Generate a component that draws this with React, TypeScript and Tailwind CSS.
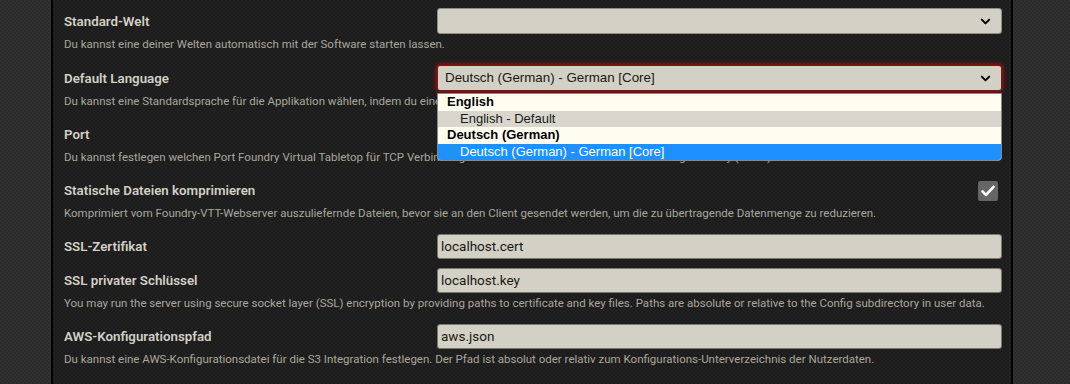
import { ChevronDown } from 'lucide-react'

const uiFont = "font-['Roboto','Noto_Sans',sans-serif]"

type Row = {
  label: string
  hint?: string
  kind: 'select' | 'text' | 'check'
  value?: string
  focus?: boolean
}

const rows: Row[] = [
  {
    label: 'Standard-Welt',
    kind: 'select',
    value: '',
    hint: 'Du kannst eine deiner Welten automatisch mit der Software starten lassen.',
  },
  {
    label: 'Default Language',
    kind: 'select',
    value: 'Deutsch (German) - German [Core]',
    focus: true,
    hint: 'Du kannst eine Standardsprache für die Applikation wählen, indem du eine der installierten Sprachen auswählst.',
  },
  {
    label: 'Port',
    kind: 'text',
    value: '30000',
    hint: 'Du kannst festlegen welchen Port Foundry Virtual Tabletop für TCP Verbindungen nutzen. Zudem kannst du Universal Plug and Play (UPnP) verwenden.',
  },
  {
    label: 'Statische Dateien komprimieren',
    kind: 'check',
    hint: 'Komprimiert vom Foundry-VTT-Webserver auszuliefernde Dateien, bevor sie an den Client gesendet werden, um die zu übertragende Datenmenge zu reduzieren.',
  },
  { label: 'SSL-Zertifikat', kind: 'text', value: 'localhost.cert' },
  {
    label: 'SSL privater Schlüssel',
    kind: 'text',
    value: 'localhost.key',
    hint: 'You may run the server using secure socket layer (SSL) encryption by providing paths to certificate and key files. Paths are absolute or relative to the Config subdirectory in user data.',
  },
  {
    label: 'AWS-Konfigurationspfad',
    kind: 'text',
    value: 'aws.json',
    hint: 'Du kannst eine AWS-Konfigurationsdatei für die S3 Integration festlegen. Der Pfad ist absolut oder relativ zum Konfigurations-Unterverzeichnis der Nutzerdaten.',
  },
]

function LanguageMenu() {
  return (
    <div className="absolute left-0 right-0 top-[28px] z-10 overflow-hidden rounded-b-[4px] border border-[#8a8a8a] bg-[#fffdf0] font-['Liberation_Sans',Arial,sans-serif] text-[13px] text-black">
      <div className="h-[16.5px] pl-[9px] font-bold leading-[16.5px]">English</div>
      <div className="h-[16.5px] bg-[#d9d7cd] pl-[22px] leading-[16.5px] text-[#1a1a1a]">English - Default</div>
      <div className="h-[16.5px] pl-[9px] font-bold leading-[16.5px]">Deutsch (German)</div>
      <div className="h-[16.5px] bg-[#1e90ff] pl-[22px] leading-[16.5px] text-white">Deutsch (German) - German [Core]</div>
    </div>
  )
}

function Field({ row }: { row: Row }) {
  if (row.kind === 'check') {
    return (
      <div className="flex h-[25px] flex-1 items-center justify-end pr-[4px]">
        <div className="flex h-[20px] w-[20px] items-center justify-center rounded-[2px] bg-[#666]">
          <svg width="14" height="12" viewBox="0 0 14 12">
            <path d="M1.5 6.5 L5 10 L12.5 1.8" fill="none" stroke="white" strokeWidth="2.6" strokeLinecap="round" strokeLinejoin="round" />
          </svg>
        </div>
      </div>
    )
  }
  if (row.kind === 'select') {
    return (
      <div className="relative flex-1">
        <div
          className={`flex h-[26px] items-center justify-between rounded-[3px] border bg-[#d3d1c5] pl-[7px] pr-[8px] font-['Liberation_Sans',Arial,sans-serif] text-[13.33px] text-[#191813] ${
            row.focus ? 'border-[#6e1a12] shadow-[0_0_5px_#ff0000]' : 'border-[#8f8d85]'
          }`}
        >
          <span>{row.value}</span>
          <ChevronDown size={15} strokeWidth={3.2} className="text-black" />
        </div>
        {row.focus && <LanguageMenu />}
      </div>
    )
  }
  return (
    <div className="flex-1">
      <div className="flex h-[25px] items-center rounded-[3px] border border-[#7a7971] bg-[#d3d1c5] pl-[3px] text-[13.5px] text-[#191813]">
        {row.value}
      </div>
    </div>
  )
}

export default function App() {
  return (
    <div className="h-[384px] w-[1070px] overflow-hidden bg-[#2c2c2c] bg-[repeating-conic-gradient(#2a2a2a_0_25%,#313131_0_50%)] bg-[length:4px_4px]">
      <div
        className={`ml-[51px] h-full w-[962px] border-x-2 border-black bg-[#1e1e1e] bg-[repeating-conic-gradient(#1c1c1c_0_25%,#212121_0_50%)] bg-[length:4px_4px] pl-[11px] pr-[9px] pt-[8px] ${uiFont}`}
      >
        <div className="flex flex-col gap-[9px]">
          {rows.map((row) => (
            <div key={row.label}>
              <div className="flex items-center">
                <label className="w-[373px] shrink-0 pt-[1px] text-[13.3px] font-semibold text-[#d3d0c5]">{row.label}</label>
                <Field row={row} />
              </div>
              {row.hint && (
                <p className="mb-[4px] mt-[2px] whitespace-nowrap text-[11.5px] leading-[16px] text-[#aaa79d]">{row.hint}</p>
              )}
            </div>
          ))}
        </div>
      </div>
    </div>
  )
}
